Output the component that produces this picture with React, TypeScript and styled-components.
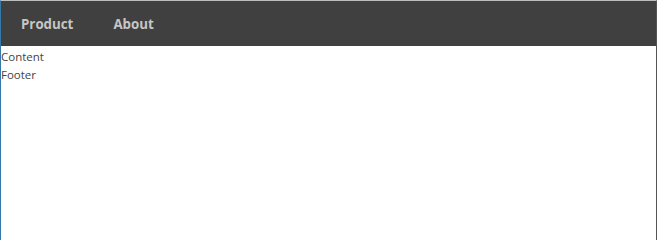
import { FC } from "react";
import styled, { createGlobalStyle } from "styled-components";

const GlobalStyle = createGlobalStyle`
  html, body {
    margin: 0;
    padding: 0;
    height: 100%;
    background: #fff;
  }
  #root {
    height: 100%;
  }
`;

const navItems = ["Product", "About"];

const App: FC = () => {
  return (
    <>
      <GlobalStyle />
      <StFrame>
        <StHeader>
          {navItems.map(item => (
            <StNavLink key={item}>{item}</StNavLink>
          ))}
        </StHeader>
        <StMain>
          <StText>Content</StText>
          <StText>Footer</StText>
        </StMain>
      </StFrame>
    </>
  );
};

export default App;

const StFrame = styled.div`
  box-sizing: border-box;
  height: 100%;
  border-top: 1px solid #bdbdbd;
  border-left: 1px solid #3479a8;
  border-right: 1px solid #555;
  display: flex;
  flex-direction: column;
`;

const StHeader = styled.nav`
  display: flex;
  align-items: center;
  height: 45px;
  background-color: #404040;
`;

const StNavLink = styled.a`
  padding: 0 20px;
  font-family: "Segoe UI", "Open Sans", sans-serif;
  font-weight: 700;
  font-size: 13.3px;
  color: #c6c6c6;
  cursor: pointer;
`;

const StMain = styled.main`
  padding-top: 2px;
`;

const StText = styled.div`
  font-family: "Segoe UI", "Open Sans", sans-serif;
  font-size: 11.5px;
  line-height: 18px;
  color: #444;
`;
